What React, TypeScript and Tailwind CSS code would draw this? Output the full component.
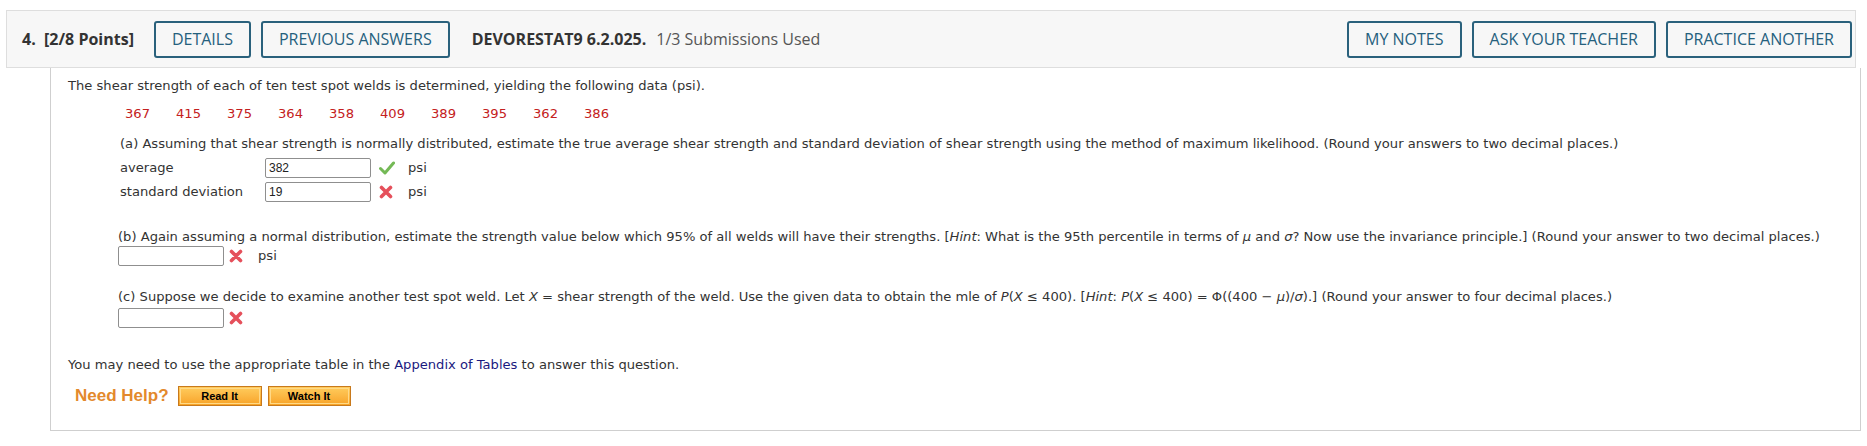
import React from 'react';

const data = [367, 415, 375, 364, 358, 409, 389, 395, 362, 386];

function Check() {
  return (
    <svg width="16" height="14" viewBox="0 0 16 14" className="shrink-0">
      <path d="M1.5 7.5 L6 12 L14.5 2" fill="none" stroke="#74b956" strokeWidth="3" strokeLinecap="round" strokeLinejoin="round" />
    </svg>
  );
}

function Cross() {
  return (
    <svg width="14" height="14" viewBox="0 0 14 14" className="shrink-0">
      <path d="M2.5 2.5 L11.5 11.5 M11.5 2.5 L2.5 11.5" fill="none" stroke="#e5505b" strokeWidth="3.6" strokeLinecap="round" />
    </svg>
  );
}

function HeaderButton({ label }: { label: string }) {
  return (
    <button className="h-[37px] px-[16px] rounded-[3px] border-2 border-[#2a617c] bg-[#f7f7f7] text-[#25607d] text-[16px] leading-none">
      {label}
    </button>
  );
}

function Answer({ value }: { value?: string }) {
  return (
    <div className="w-[106px] h-[20px] border border-[#8f8f8f] rounded-[2px] bg-white px-[3px] text-[12px] leading-[18px] text-[#222] font-['Liberation_Sans',Arial,sans-serif]">
      {value}
    </div>
  );
}

function HelpButton({ label }: { label: string }) {
  return (
    <button className="w-full h-[20px] border border-[#c8791c] bg-gradient-to-b from-[#ffcc5c] to-[#f7a325] p-[1px]">
      <span className="flex h-full items-center justify-center border border-[#ffd987] text-[11px] font-bold text-black font-['Liberation_Sans',Arial,sans-serif]">
        {label}
      </span>
    </button>
  );
}

export default function App() {
  return (
    <div className="w-[1867px] h-[446px] bg-white pt-[10px] font-['DejaVu_Sans',Verdana,sans-serif] text-[13.1px] text-[#333]">
      {/* question header */}
      <div className="ml-[6px] w-[1850px] h-[58px] flex items-center border border-[#dedede] bg-[#f7f7f7] pl-[15px] pr-[3px] font-['Open_Sans',sans-serif]">
        <span className="text-[16px] font-bold text-[#333] mr-[20px]">4.&nbsp; [2/8 Points]</span>
        <div className="flex gap-[10px]">
          <HeaderButton label="DETAILS" />
          <HeaderButton label="PREVIOUS ANSWERS" />
        </div>
        <span className="ml-[22px] text-[16px] font-bold text-[#333]">DEVORESTAT9 6.2.025.</span>
        <span className="ml-[10px] text-[16px] text-[#555]">1/3 Submissions Used</span>
        <div className="ml-auto flex gap-[10px]">
          <HeaderButton label="MY NOTES" />
          <HeaderButton label="ASK YOUR TEACHER" />
          <HeaderButton label="PRACTICE ANOTHER" />
        </div>
      </div>

      {/* question body */}
      <div className="ml-[50px] w-[1811px] h-[363px] border-x border-b border-[#cfcfcf] pl-[17px] pt-[9px]">
        <p className="leading-[18px]">
          The shear strength of each of ten test spot welds is determined, yielding the following data (psi).
        </p>
        <div className="mt-[10px] ml-[57px] flex text-[#c42020] leading-[18px]">
          {data.map((d, i) => (
            <span key={i} className="w-[51px]">{d}</span>
          ))}
        </div>

        <div className="ml-[52px]">
          <p className="mt-[12px] leading-[18px]">
            (a) Assuming that shear strength is normally distributed, estimate the true average shear strength and standard deviation of shear strength using the method of maximum likelihood. (Round your answers to two decimal places.)
          </p>
          <div className="mt-[5px] flex flex-col gap-[4px]">
            <div className="flex items-center">
              <span className="w-[145px]">average</span>
              <Answer value="382" />
              <span className="ml-[8px]"><Check /></span>
              <span className="ml-[13px]">psi</span>
            </div>
            <div className="flex items-center">
              <span className="w-[145px]">standard deviation</span>
              <Answer value="19" />
              <span className="ml-[8px]"><Cross /></span>
              <span className="ml-[15px]">psi</span>
            </div>
          </div>

          <p className="mt-[26px] ml-[-2px] leading-[18px]">
            (b) Again assuming a normal distribution, estimate the strength value below which 95% of all welds will have their strengths. [<i>Hint</i>: What is the 95th percentile in terms of <i>μ</i> and <i>σ</i>? Now use the invariance principle.] (Round your answer to two decimal places.)
          </p>
          <div className="ml-[-2px] flex items-center">
            <Answer />
            <span className="ml-[5px]"><Cross /></span>
            <span className="ml-[15px]">psi</span>
          </div>

          <p className="mt-[22px] ml-[-2px] leading-[18px]">
            (c) Suppose we decide to examine another test spot weld. Let <i>X</i> = shear strength of the weld. Use the given data to obtain the mle of <i>P</i>(<i>X</i> ≤ 400). [<i>Hint</i>: <i>P</i>(<i>X</i> ≤ 400) = Φ((400 − <i>μ</i>)/<i>σ</i>).] (Round your answer to four decimal places.)
          </p>
          <div className="mt-[2px] ml-[-2px] flex items-center">
            <Answer />
            <span className="ml-[5px]"><Cross /></span>
          </div>
        </div>

        <p className="mt-[28px] leading-[18px]">
          You may need to use the appropriate table in the <span className="text-[#1a1a80]">Appendix of Tables</span> to answer this question.
        </p>
        <div className="mt-[9px] ml-[7px] h-[26px] flex items-center gap-[6px]">
          <span className="mr-[3px] text-[17px] font-bold text-[#e3892c] font-['Liberation_Sans',Arial,sans-serif]">Need Help?</span>
          <div className="w-[84px] flex"><HelpButton label="Read It" /></div>
          <div className="w-[83px] flex"><HelpButton label="Watch It" /></div>
        </div>
      </div>
    </div>
  );
}
